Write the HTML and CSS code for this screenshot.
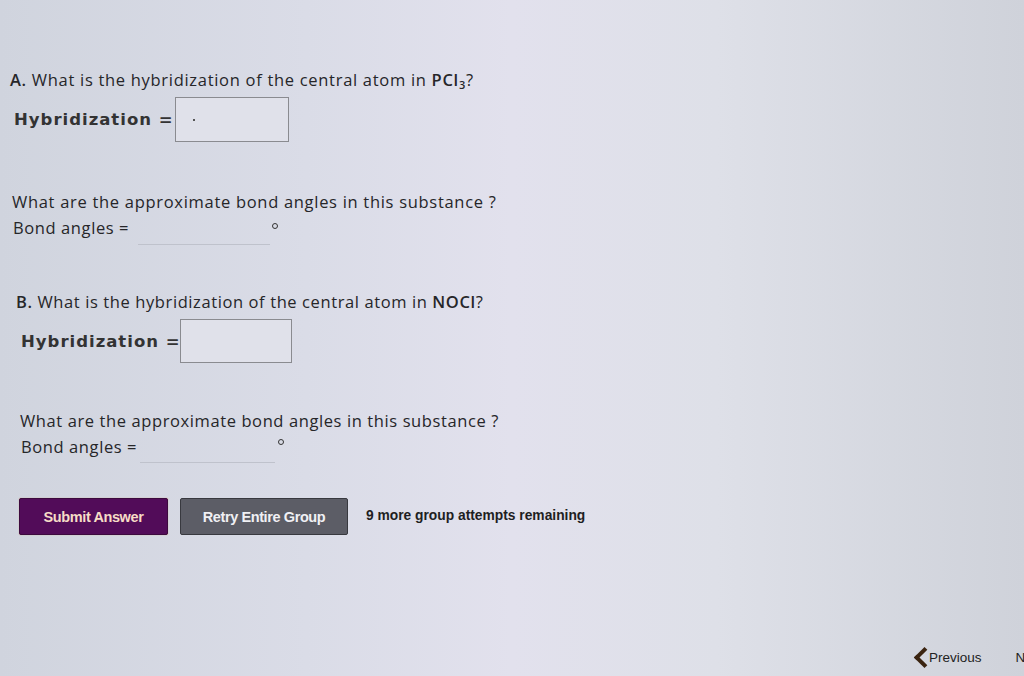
FILE: index.html
```html
<!DOCTYPE html>
<html lang="en">
<head>
    <meta charset="UTF-8">
    <title>Hybridization Questions</title>
    <link rel="stylesheet" href="styles.css">
</head>
<body>

<div class="page">
    <div class="part part-a">
        <p class="question"><b>A.</b> What is the hybridization of the central atom in <b>PCl<sub>3</sub></b>?</p>
        <div class="hyb-row">
            <span class="hyb-label">Hybridization =</span>
            <span class="box"><span class="dot"></span></span>
        </div>
        <p class="question angles-q">What are the approximate bond angles in this substance ?</p>
        <div class="angle-row">
            <span class="angle-label">Bond angles =</span>
            <span class="line-input"></span>
            <span class="deg"></span>
        </div>
    </div>

    <div class="part part-b">
        <p class="question"><b>B.</b> What is the hybridization of the central atom in <b>NOCl</b>?</p>
        <div class="hyb-row">
            <span class="hyb-label">Hybridization =</span>
            <span class="box"></span>
        </div>
        <p class="question angles-q">What are the approximate bond angles in this substance ?</p>
        <div class="angle-row">
            <span class="angle-label">Bond angles =</span>
            <span class="line-input"></span>
            <span class="deg"></span>
        </div>
    </div>

    <div class="actions">
        <button class="btn submit">Submit Answer</button>
        <button class="btn retry">Retry Entire Group</button>
        <span class="attempts">9 more group attempts remaining</span>
    </div>
</div>

<div class="nav">
    <span class="prev"><span class="chev"></span>Previous</span>
    <span class="next">N</span>
</div>

</body>
</html>
```

FILE: styles.css
```css
html, body {
    height: 100%;
}
body {
    margin: 0;
    font-family: "Open Sans", sans-serif;
    color: #262629;
    background: linear-gradient(90deg, #d0d4de 0%, #dadce7 30%, #e2e1ed 50%, #dee0e8 70%, #cfd2da 100%);
    overflow: hidden;
    position: relative;
}
.page {
    padding-top: 69px;
}
.question {
    margin: 0;
    font-size: 16.5px;
    line-height: 22px;
    letter-spacing: 0.7px;
    white-space: nowrap;
}
.question b {
    font-weight: 600;
}
.question sub {
    font-size: 11px;
    vertical-align: -3px;
    line-height: 0;
}
.part-a {
    padding-left: 10px;
}
.part-b {
    padding-left: 16px;
    margin-top: 46px;
}
.part-b .question {
    letter-spacing: 0.6px;
}
.hyb-row {
    display: flex;
    align-items: center;
    margin-top: 6px;
    padding-left: 4px;
}
.part-b .hyb-row {
    padding-left: 5px;
}
.hyb-label {
    font-family: "DejaVu Sans", sans-serif;
    font-weight: bold;
    font-size: 16.5px;
    color: #333;
    letter-spacing: 1px;
    margin-right: 1px;
}
.part-b .hyb-label {
    margin-right: -1px;
}
.box {
    width: 114px;
    height: 45px;
    border: 1px solid #8a8b90;
    background: #e0e1ea;
    display: flex;
    align-items: center;
    padding-left: 17px;
    box-sizing: border-box;
}
.part-b .box {
    width: 112px;
    height: 44px;
}
.dot {
    width: 2px;
    height: 2px;
    background: #555;
}
.angles-q {
    margin-top: 49px;
    padding-left: 2px;
}
.part-b .angles-q {
    margin-top: 47px;
    padding-left: 4px;
}
.angle-row {
    display: flex;
    align-items: flex-start;
    padding-left: 3px;
    margin-top: 4px;
    font-size: 16.5px;
    letter-spacing: 0.6px;
    white-space: nowrap;
}
.part-b .angle-row {
    padding-left: 5px;
}
.angle-label {
    line-height: 22px;
}
.line-input {
    width: 132px;
    height: 27px;
    margin-left: 9px;
    border-bottom: 1px solid #bfc2cc;
}
.part-b .line-input {
    width: 135px;
    height: 26px;
    margin-left: 3px;
}
.deg {
    width: 4px;
    height: 4px;
    border: 1.5px solid #333;
    border-radius: 50%;
    margin-left: 2px;
    margin-top: 6px;
}
.part-b .deg {
    margin-left: 3px;
    margin-top: 3px;
}
.actions {
    display: flex;
    align-items: center;
    margin-top: 35px;
    padding-left: 19px;
}
.btn {
    font-family: "Liberation Sans", Arial, sans-serif;
    font-weight: bold;
    font-size: 14.5px;
    height: 37px;
    border-radius: 2px;
    letter-spacing: -0.4px;
    cursor: pointer;
}
.submit {
    width: 149px;
    background: #520c59;
    color: #f6dcc6;
    border: 1px solid #3c0a3e;
    box-shadow: 0 0 1px #c98a5a;
}
.retry {
    width: 168px;
    margin-left: 12px;
    background: #5c5d66;
    color: #f0f0f4;
    border: 1px solid #38393f;
}
.attempts {
    font-family: "Liberation Sans", Arial, sans-serif;
    font-weight: bold;
    font-size: 13.8px;
    color: #1e1e22;
    margin-left: 18px;
    margin-top: -2px;
}
.nav {
    position: absolute;
    left: 910px;
    top: 650px;
    display: flex;
    align-items: center;
    font-family: "Liberation Sans", Arial, sans-serif;
    font-size: 13.5px;
    color: #222;
}
.chev {
    display: inline-block;
    width: 11px;
    height: 11px;
    border-left: 4px solid #3b2410;
    border-bottom: 4px solid #3b2410;
    transform: rotate(45deg);
    margin-right: -3px;
    margin-left: 7px;
}
.prev {
    display: flex;
    align-items: center;
}
.next {
    margin-left: 34px;
}
```
